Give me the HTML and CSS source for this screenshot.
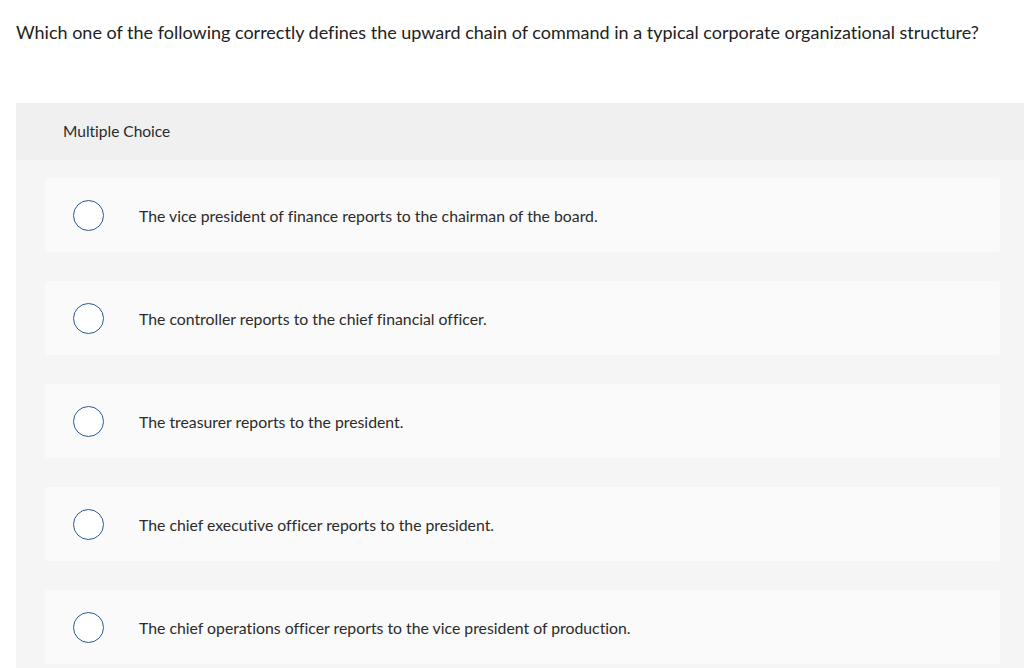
FILE: index.html
```html
<!DOCTYPE html>
<html>
<head>
<meta charset="utf-8">
<link rel="stylesheet" href="styles.css">
</head>
<body>
<div class="page">
  <p class="question">Which one of the following correctly defines the upward chain of command in a typical corporate organizational structure?</p>
  <div class="panel">
    <div class="panel-head">Multiple Choice</div>
    <div class="options">
      <div class="option"><span class="radio"></span><span class="label">The vice president of finance reports to the chairman of the board.</span></div>
      <div class="option"><span class="radio"></span><span class="label">The controller reports to the chief financial officer.</span></div>
      <div class="option"><span class="radio"></span><span class="label">The treasurer reports to the president.</span></div>
      <div class="option"><span class="radio"></span><span class="label">The chief executive officer reports to the president.</span></div>
      <div class="option"><span class="radio"></span><span class="label">The chief operations officer reports to the vice president of production.</span></div>
    </div>
  </div>
</div>
</body>
</html>
```
FILE: styles.css
```css
html, body {
  margin: 0;
  padding: 0;
  background: #ffffff;
}
body {
  font-family: Lato, "Open Sans", Arial, sans-serif;
  font-variant-ligatures: none;
  color: #2b2b2b;
}
.page {
  padding: 0 0 0 16px;
}
.question {
  margin: 0;
  padding-top: 21px;
  height: 103px;
  box-sizing: border-box;
  font-size: 18px;
  line-height: 22px;
  color: #222;
}
.panel {
  background: #f5f5f5;
}
.panel-head {
  background: #f0f0f0;
  height: 57px;
  box-sizing: border-box;
  padding: 18px 0 0 47px;
  font-size: 15.5px;
  line-height: 20px;
  color: #2b2b2b;
}
.options {
  padding: 18px 24px 10px 29px;
  display: flex;
  flex-direction: column;
  gap: 29px;
}
.option {
  background: #fafafa;
  border-radius: 3px;
  height: 74px;
  display: flex;
  align-items: center;
  padding-left: 28px;
}
.radio {
  width: 29px;
  height: 29px;
  border: 1.5px solid #2c5a94;
  border-radius: 50%;
  background: #fff;
  flex: none;
}
.label {
  margin-left: 35px;
  font-size: 15.8px;
  color: #2b2b2b;
}
```
